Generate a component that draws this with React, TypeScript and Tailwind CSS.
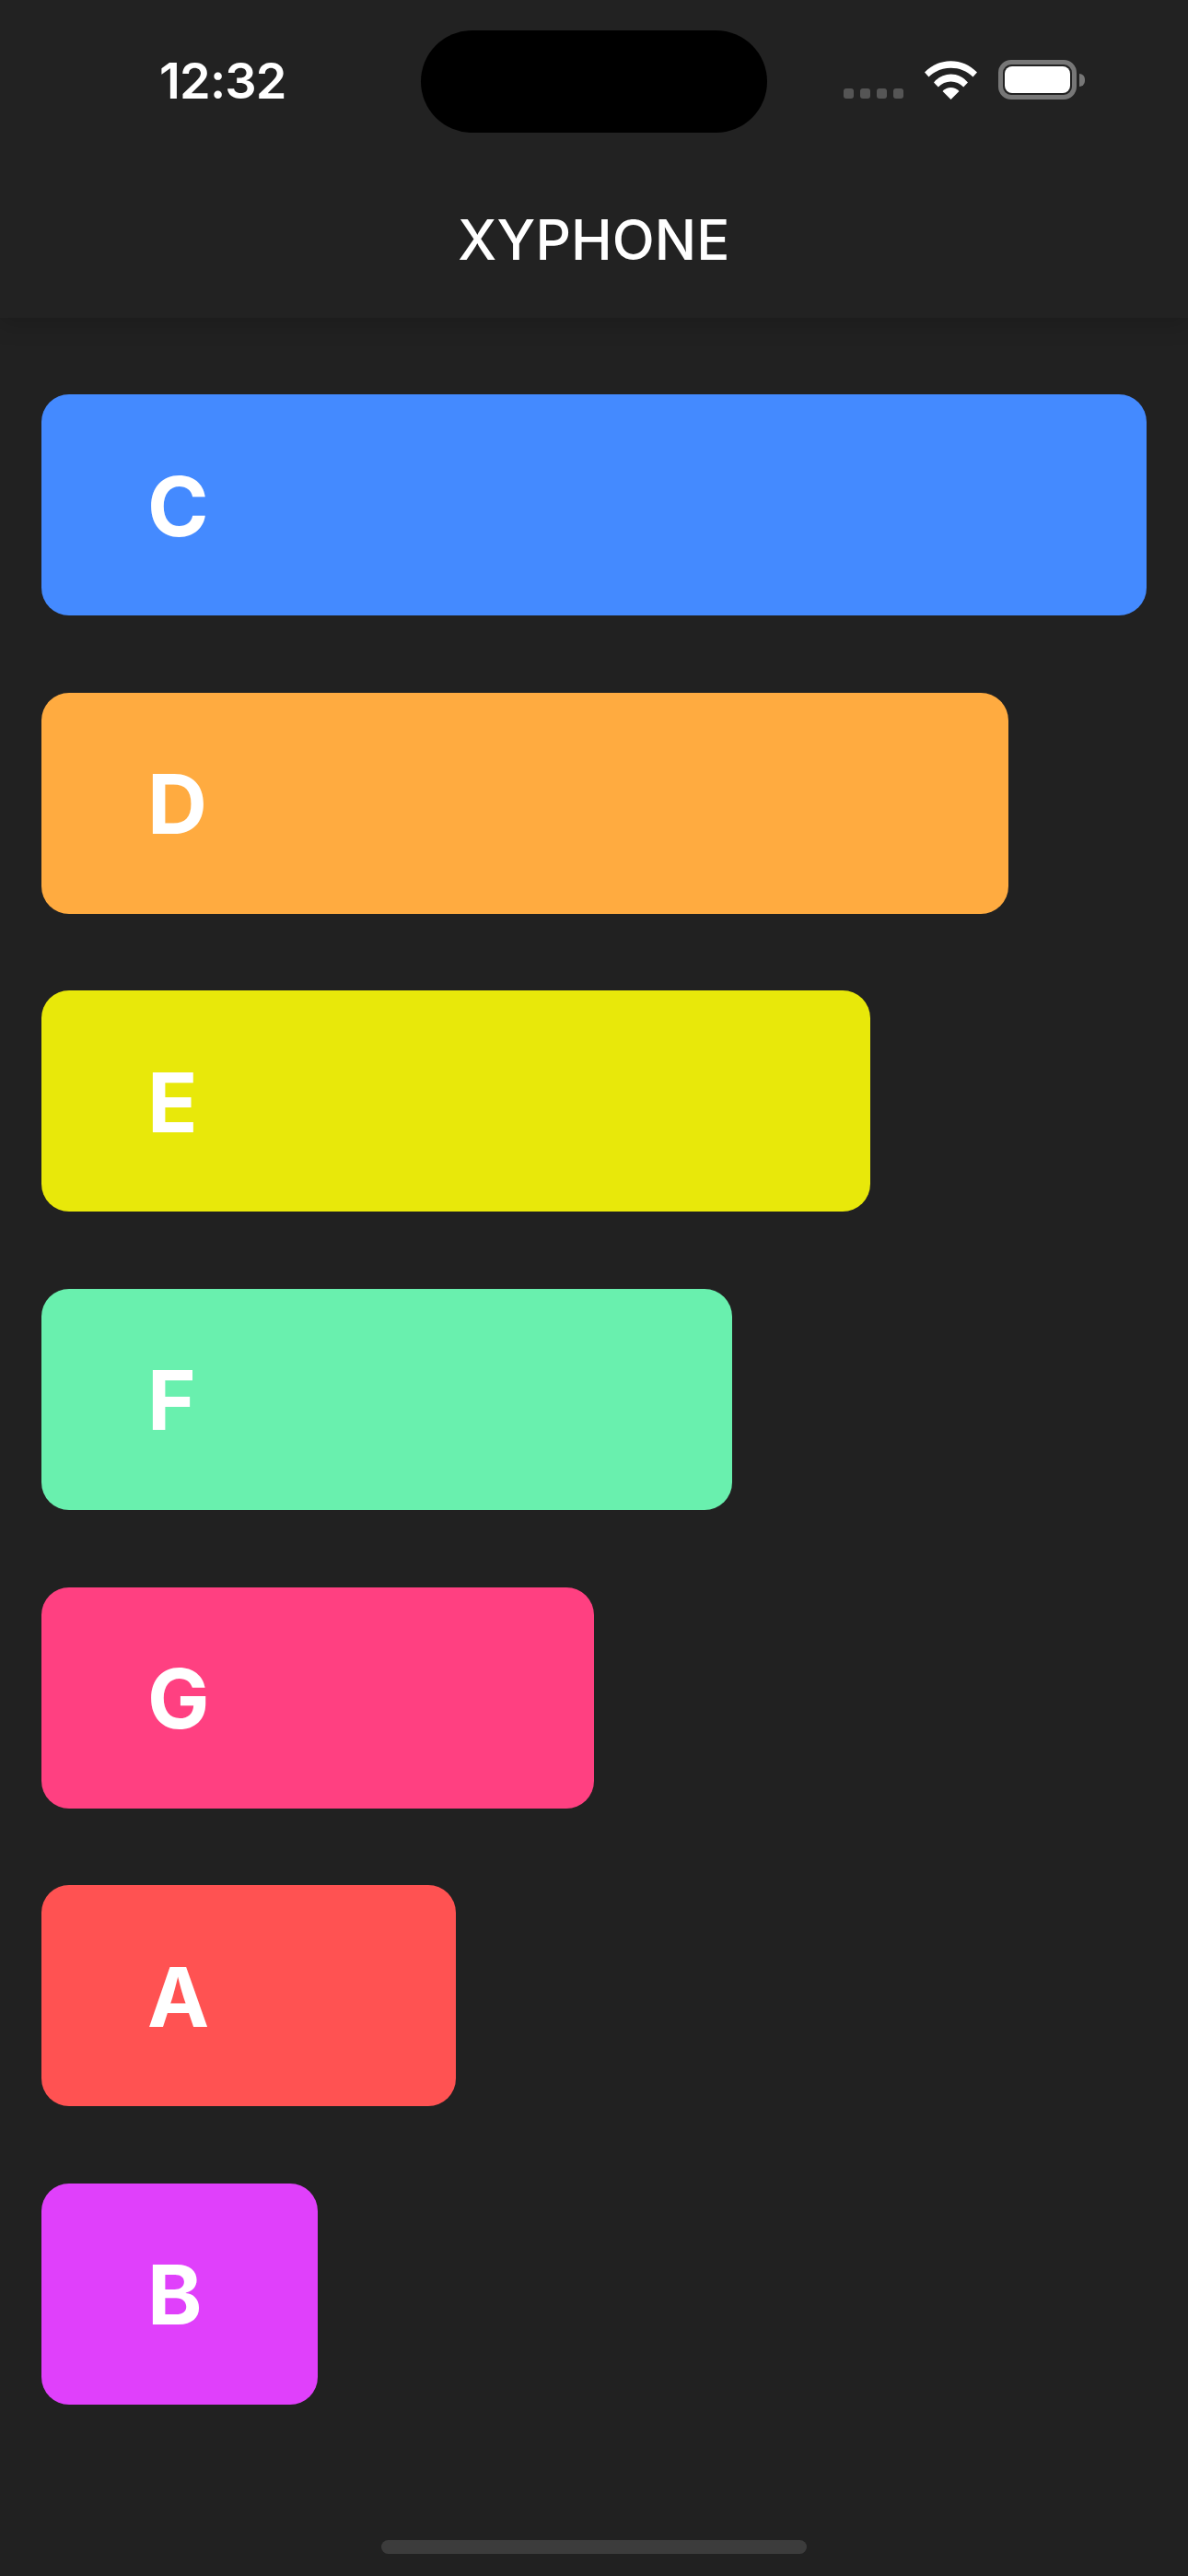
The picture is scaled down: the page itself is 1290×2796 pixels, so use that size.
const bars = [
  { label: "C", width: "w-[1200px]", color: "bg-[#448aff]" },
  { label: "D", width: "w-[1050px]", color: "bg-[#ffab40]" },
  { label: "E", width: "w-[900px]", color: "bg-[#e8e80a]" },
  { label: "F", width: "w-[750px]", color: "bg-[#69f0ae]" },
  { label: "G", width: "w-[600px]", color: "bg-[#ff4081]" },
  { label: "A", width: "w-[450px]", color: "bg-[#ff5252]" },
  { label: "B", width: "w-[300px]", color: "bg-[#e040fb]" },
];

function Wifi() {
  return (
    <svg width="57" height="42" viewBox="0 0 57 42" fill="#fff">
      <path d="M0 12.5C15.5 -4 41.5 -4 57 12.5L52.5 17.5C39.5 4.5 17.5 4.5 4.5 17.5Z" />
      <path d="M10 23.5C20 11.5 37 11.5 47 23.5L42.2 28.5C35 20.5 22 20.5 14.8 28.5Z" />
      <path d="M19.5 33C24.5 27.8 32.5 27.8 37.5 33L28.5 42Z" />
    </svg>
  );
}

function Battery() {
  return (
    <div className="flex items-center gap-[3px]">
      <div className="flex h-[43px] w-[85px] items-center justify-center rounded-[14px] border-[5px] border-[#777777]">
        <div className="h-[29px] w-[71px] rounded-[8px] bg-white" />
      </div>
      <div className="h-[14px] w-[6px] rounded-r-full bg-[#777777]" />
    </div>
  );
}

export default function App() {
  return (
    <div className="h-[2796px] w-[1290px] overflow-hidden bg-[#212121] font-['Inter',sans-serif] text-white">
      <header className="relative h-[345px] bg-[#222222] shadow-[0_6px_24px_rgba(0,0,0,0.18)]">
        <div className="flex items-start pt-[33px]">
          <div className="ml-[173px] mt-[23px] w-[284px] text-[54px] leading-[64px] font-semibold tracking-[-0.8px]">12:32</div>
          <div className="h-[111px] w-[376px] rounded-full bg-black" />
          <div className="ml-[83px] mt-[32px] flex items-end">
            <div className="flex gap-[7px] pb-[1px]">
              <span className="h-[11px] w-[11px] rounded-[3px] bg-[#555555]" />
              <span className="h-[11px] w-[11px] rounded-[3px] bg-[#555555]" />
              <span className="h-[11px] w-[11px] rounded-[3px] bg-[#555555]" />
              <span className="h-[11px] w-[11px] rounded-[3px] bg-[#555555]" />
            </div>
            <div className="ml-[23px] mr-[23px]"><Wifi /></div>
            <Battery />
          </div>
        </div>
        <h1 className="mt-[80px] text-center text-[60px] leading-[72px] font-medium tracking-[0.1px]">XYPHONE</h1>
      </header>
      <main className="flex flex-col items-start gap-[83.67px] px-[45px] pt-[83px]">
        {bars.map((bar) => (
          <div key={bar.label} className={`flex h-[240px] items-center rounded-[30px] pl-[115px] ${bar.width} ${bar.color}`}>
            <span className="pt-[3px] text-[90px] leading-none font-bold">{bar.label}</span>
          </div>
        ))}
      </main>
      <div className="mx-auto mt-[147px] h-[15px] w-[462px] rounded-full bg-[#3c3c3c]" />
    </div>
  );
}
